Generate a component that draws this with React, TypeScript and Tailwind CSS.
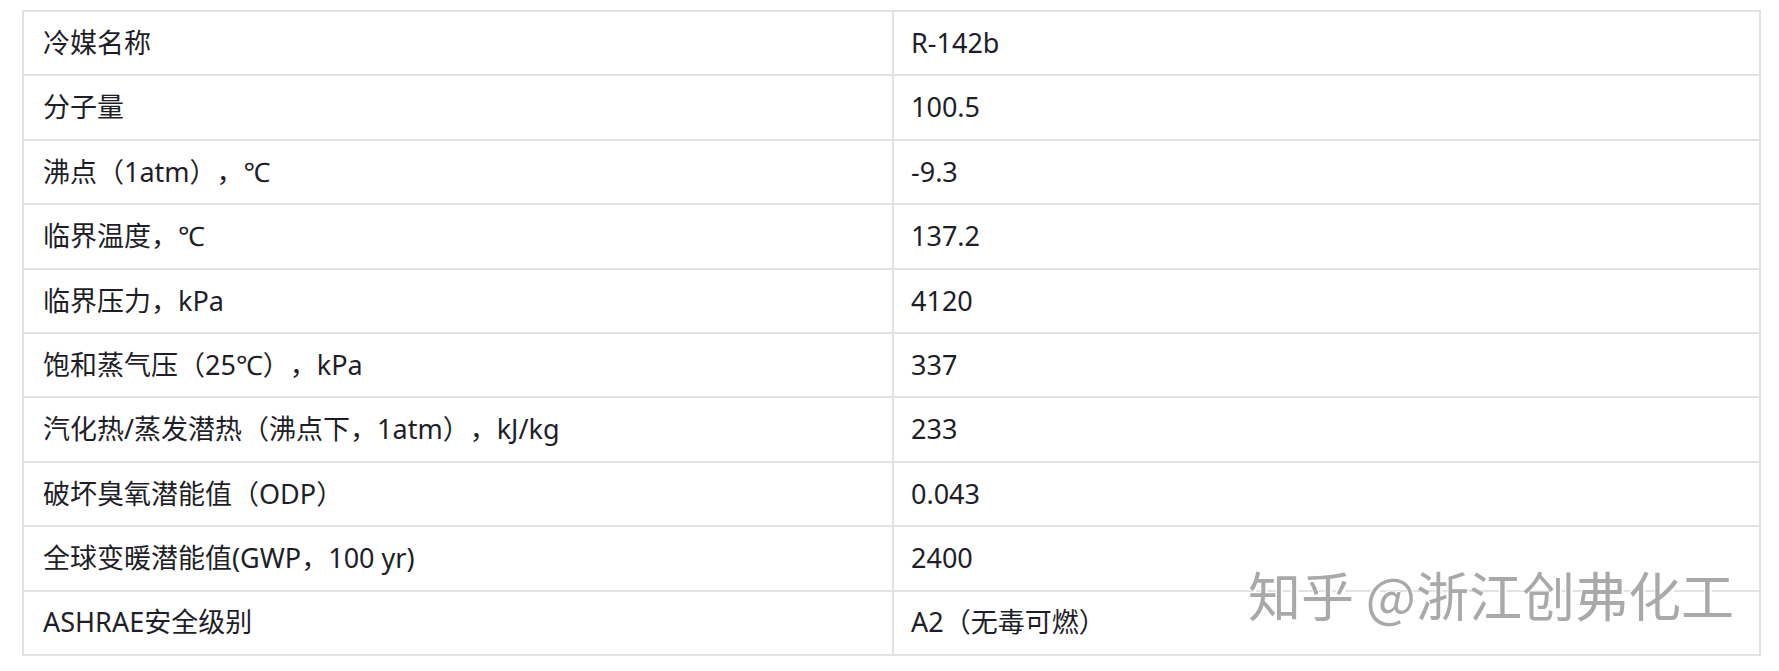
import React from 'react';

const ROWS: [string, string][] = [
  ['冷媒名称', 'R-142b'],
  ['分子量', '100.5'],
  ['沸点（1atm），℃', '-9.3'],
  ['临界温度，℃', '137.2'],
  ['临界压力，kPa', '4120'],
  ['饱和蒸气压（25℃），kPa', '337'],
  ['汽化热/蒸发潜热（沸点下，1atm），kJ/kg', '233'],
  ['破坏臭氧潜能值（ODP）', '0.043'],
  ['全球变暖潜能值(GWP，100 yr)', '2400'],
  ['ASHRAE安全级别', 'A2（无毒可燃）'],
];

export default function App() {
  return (
    <div className="min-h-[671px] w-[1779px] bg-white pl-[22px] pt-[10px] font-['Noto_Sans','Noto_Sans_CJK_SC',sans-serif] text-[#1e1e28] [text-spacing-trim:space-all]">
      <div className="relative w-[1739px]">
        <table className="w-full border-collapse border-2 border-[#e2e2e2] text-[27px]">
          <tbody>
            {ROWS.map(([k, v]) => (
              <tr key={k} className="h-[64.4px]">
                <td className="w-[870px] border-2 border-[#e2e2e2] px-[19px] py-0 align-middle">{k}</td>
                <td className="border-2 border-[#e2e2e2] px-[17px] py-0 align-middle">{v}</td>
              </tr>
            ))}
          </tbody>
        </table>

        {/* 知乎 watermark */}
        <div className="pointer-events-none absolute left-[1226px] top-[558px] whitespace-nowrap font-['Noto_Sans_CJK_SC',sans-serif] text-[53px] leading-none text-[#a9a9a9] [text-shadow:2px_2px_0_#ffffff,-1px_-1px_0_#ffffff]">
          知乎 @浙江创弗化工
        </div>
      </div>
    </div>
  );
}
